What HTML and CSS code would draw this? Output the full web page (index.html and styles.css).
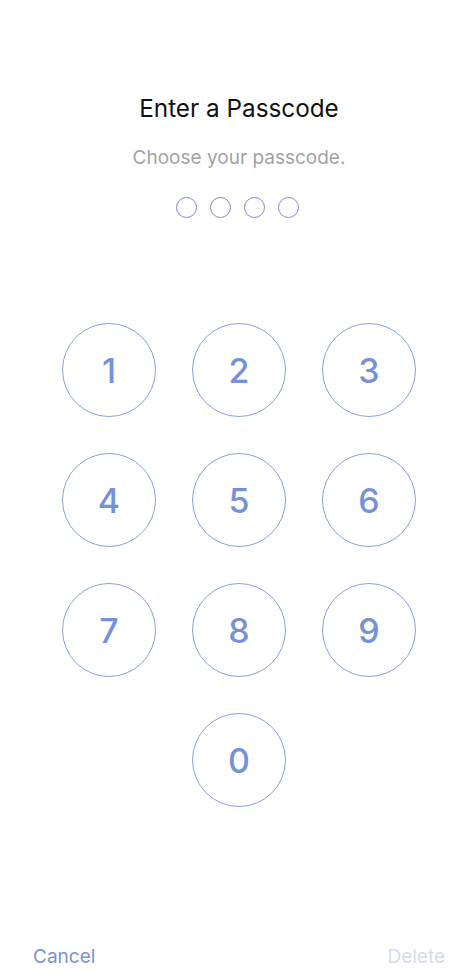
FILE: index.html
```html
<!DOCTYPE html>
<html>
<head>
<meta charset="utf-8">
<link rel="stylesheet" href="styles.css">
</head>
<body>
<div class="screen">
  <header class="head">
    <h1 class="title">Enter a Passcode</h1>
    <p class="subtitle">Choose your passcode.</p>
    <div class="dots">
      <span class="dot"></span><span class="dot"></span><span class="dot"></span><span class="dot"></span>
    </div>
  </header>
  <div class="pad">
    <button class="key">1</button>
    <button class="key">2</button>
    <button class="key">3</button>
    <button class="key">4</button>
    <button class="key">5</button>
    <button class="key">6</button>
    <button class="key">7</button>
    <button class="key">8</button>
    <button class="key">9</button>
    <button class="key zero">0</button>
  </div>
  <footer class="foot">
    <span class="cancel">Cancel</span>
    <span class="delete">Delete</span>
  </footer>
</div>
</body>
</html>
```
FILE: styles.css
```css
html, body {
  margin: 0;
  padding: 0;
  background: #ffffff;
}
.screen {
  width: 474px;
  height: 976px;
  display: flex;
  flex-direction: column;
  font-family: Inter, "Liberation Sans", sans-serif;
}
.head {
  display: flex;
  flex-direction: column;
  align-items: center;
  padding-top: 94px;
  padding-left: 4px;
}
.title {
  margin: 0;
  font-size: 24.3px;
  font-weight: 400;
  color: #111111;
  line-height: 28px;
}
.subtitle {
  margin: 25px 0 0;
  font-size: 19px;
  color: #a3a3a3;
  line-height: 22px;
}
.dots {
  display: flex;
  gap: 13px;
  margin-top: 28px;
  margin-left: -4px;
}
.dot {
  width: 19px;
  height: 19px;
  border: 1.6px solid #7d8cc8;
  border-radius: 50%;
}
.pad {
  display: grid;
  grid-template-columns: repeat(3, 94px);
  column-gap: 36px;
  row-gap: 36px;
  justify-content: center;
  margin-top: 105px;
  padding-left: 4px;
}
.key {
  width: 94px;
  height: 94px;
  border-radius: 50%;
  border: 1.8px solid #89a2dc;
  background: transparent;
  color: #7592d9;
  font-family: Inter, "Liberation Sans", sans-serif;
  font-size: 34px;
  font-weight: 500;
  padding: 0;
  display: flex;
  align-items: center;
  justify-content: center;
}
.zero {
  grid-column: 2;
}
.foot {
  margin-top: auto;
  display: flex;
  justify-content: space-between;
  padding: 0 29px 7px 33px;
  font-size: 19px;
  line-height: 24px;
}
.cancel {
  color: #7b93d3;
}
.delete {
  color: #d3dbf1;
}
```
